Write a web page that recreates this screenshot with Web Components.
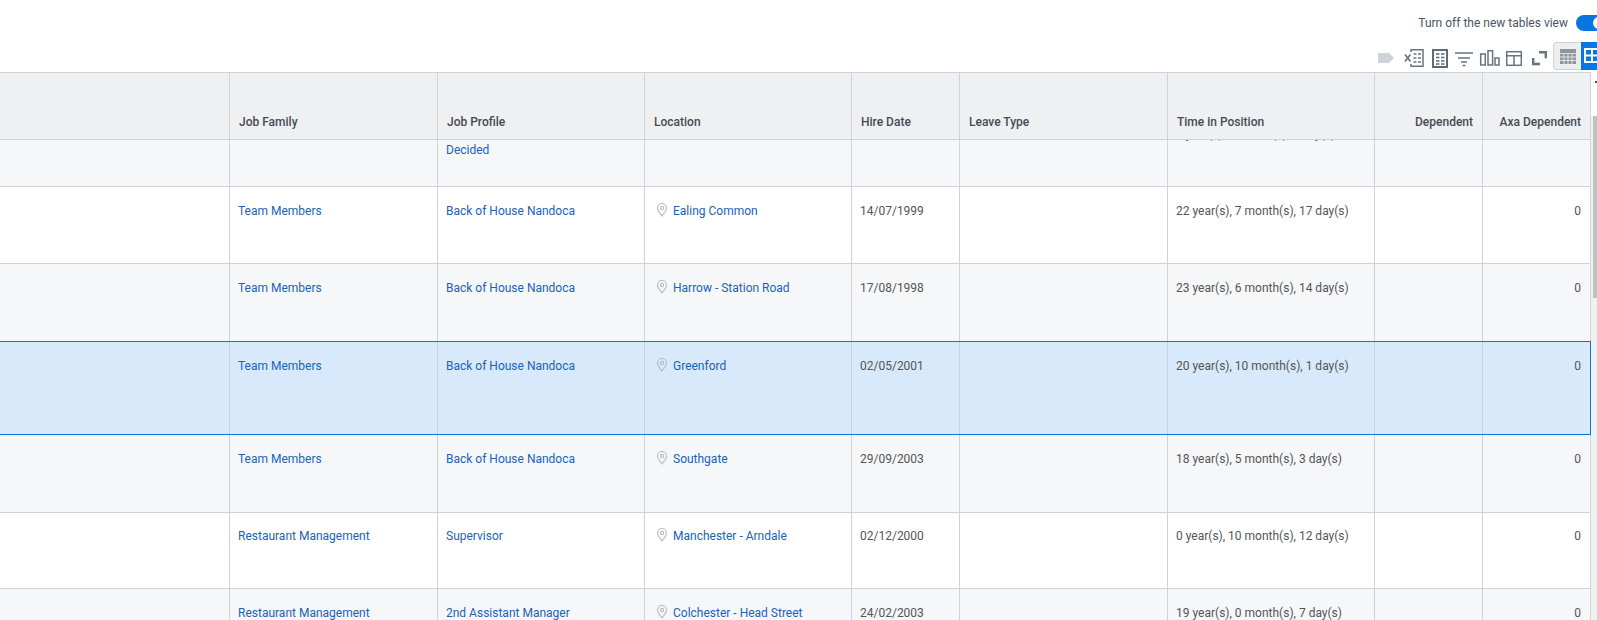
<!DOCTYPE html>
<html>
<head>
<meta charset="utf-8">
<title>Workers</title>
<style>
  html, body { margin: 0; height: 100%; overflow: hidden; background: #fff; }
  body { font-family: Roboto, "Liberation Sans", sans-serif; }
</style>
</head>
<body>
<wd-page>
  <wd-view-toggle slot="top">Turn off the new tables view</wd-view-toggle>
  <wd-toolbar slot="tools"></wd-toolbar>
  <wd-table slot="table"></wd-table>
</wd-page>

<script>
const COLS = '230px 208px 207px 207px 108px 208px 207px 108px 108px';

class WdPage extends HTMLElement {
  constructor() {
    super();
    this.attachShadow({ mode: 'open' });
    this.shadowRoot.innerHTML = `
      <style>
        :host { display: block; width: 1597px; height: 620px; overflow: hidden; position: relative; }
        #scrollbar { position: absolute; right: 0; top: 116px; bottom: 0; width: 6px; background: #f1f1f1; }
        #thumb { position: absolute; top: 0; left: 2px; right: 0; height: 182px; background: #c1c1c1; }
        #arrow { position: absolute; right: 0; top: 81px; width: 2px; height: 2px; background: #505050; }
      </style>
      <slot name="top"></slot>
      <slot name="tools"></slot>
      <slot name="table"></slot>
      <div id="arrow"></div>
      <div id="scrollbar"><div id="thumb"></div></div>
    `;
  }
}

class WdViewToggle extends HTMLElement {
  constructor() {
    super();
    this.attachShadow({ mode: 'open' });
    this.shadowRoot.innerHTML = `
      <style>
        :host { display: flex; justify-content: flex-end; align-items: center; height: 42px; box-sizing: border-box; padding-top: 4px; font-size: 12px; color: #4a5561; overflow: hidden; }
        #label { margin-right: 8px; }
        #switch { flex: none; width: 36px; height: 16px; border-radius: 8px; background: #0875e1; position: relative; margin-right: -15px; }
        #knob { position: absolute; left: 17px; top: 2px; width: 12px; height: 12px; border-radius: 50%; background: #fff; }
      </style>
      <span id="label"><slot></slot></span>
      <div id="switch"><div id="knob"></div></div>
    `;
  }
}

class WdToolbar extends HTMLElement {
  constructor() {
    super();
    this.attachShadow({ mode: 'open' });
    this.shadowRoot.innerHTML = `
      <style>
        :host { display: flex; justify-content: flex-end; align-items: flex-start; height: 30px; overflow: hidden; }
        svg { display: block; flex: none; width: 24px; height: 24px; fill: none; stroke: #6a747e; stroke-width: 1.5; }
        #icons { display: flex; margin: 4px 1px 0 0; }
        #excel { margin-left: 4px; }
        .gap { margin-left: 2px; }
        #grid { flex: none; width: 28px; height: 28px; box-sizing: border-box; background: #eceef0; border: 1px solid #ced3d9; border-right: 0; border-radius: 4px 0 0 4px; display: flex; align-items: center; justify-content: center; }
        #tile { flex: none; width: 16px; height: 28px; background: #0875e1; overflow: hidden; padding: 4px 0 0 3px; box-sizing: border-box; }
      </style>
      <div id="icons">
        <svg viewBox="0 0 24 24" style="stroke:none"><path d="M4 7h11l5 5-5 5H4z" fill="#ced3d9"/></svg>
        <svg id="excel" viewBox="0 0 24 24"><path d="M9 6V3.700h12v16.600H9V18"/><path d="M11.500 8h3M16 8h3M11.500 12h3M16 12h3M11.500 16h3M16 16h3"/><path d="M3 8.500l5.500 7M8.500 8.500l-5.500 7" stroke-width="1.700"/></svg>
        <svg class="gap" viewBox="0 0 24 24" style="stroke:#5e6a75"><rect x="5" y="4" width="14" height="17" stroke-width="2"/><path d="M8 8h3.500M13 8h3.500M8 11.500h3.500M13 11.500h3.500M8 15h3.500M13 15h3.500M8 18h3.500M13 18h3.500" stroke-width="1.500"/></svg>
        <svg viewBox="0 0 24 24"><path d="M3 7h18M6 12h12M9 16h6M10.500 19.500h3"/></svg>
        <svg class="gap" viewBox="0 0 24 24"><rect x="2.700" y="8" width="4.600" height="11"/><rect x="10" y="4.700" width="4.600" height="14.300"/><rect x="17" y="12" width="4" height="7"/></svg>
        <svg viewBox="0 0 24 24"><rect x="4.700" y="5.700" width="14.600" height="13.600"/><path d="M4.700 9.700h14.600M12 9.700v9.600"/></svg>
        <svg class="gap" viewBox="0 0 24 24"><path d="M11 6.200h6.800v6" stroke-width="2.400"/><path d="M5.200 12v6h6.800" stroke-width="2.400"/></svg>
      </div>
      <div id="grid">
        <svg viewBox="0 0 16 15" style="width:16px;height:15px;stroke:none"><rect width="16" height="15" fill="#8d959d"/><path d="M0 4.500h16M0 8h16M0 11.500h16M4 4v11M8 4v11M12 4v11" stroke="#dfe2e5" stroke-width="1"/></svg>
      </div>
      <div id="tile">
        <svg viewBox="0 0 20 15" style="width:20px;height:15px;margin-top:2px;stroke:#fff;stroke-width:2"><rect x="1" y="1" width="18" height="13"/><path d="M8 1v13M1 7.500h18"/></svg>
      </div>
    `;
  }
}

class WdHeaderCell extends HTMLElement {
  constructor() {
    super();
    this.attachShadow({ mode: 'open' });
    this.shadowRoot.innerHTML = `
      <style>
        :host { display: flex; align-items: flex-end; box-sizing: border-box; padding: 0 9px 9px 9px; border-right: 1px solid #ced3d9; font-size: 12px; font-weight: 500; color: #444b55; line-height: 16px; }
        :host([right]) { justify-content: flex-end; }
      </style>
      <slot></slot>
    `;
  }
}

class WdCell extends HTMLElement {
  constructor() {
    super();
    this.attachShadow({ mode: 'open' });
    this.shadowRoot.innerHTML = `
      <style>
        :host { display: flex; align-items: flex-start; box-sizing: border-box; padding: var(--cell-top, 16px) 9px 0 8px; border-right: 1px solid #ced3d9; font-size: 12px; line-height: 16px; color: #555; white-space: nowrap; min-width: 0; overflow: hidden; }
        :host([link]) { color: #1b62b8; }
        :host([right]) { justify-content: flex-end; }
        :host([pin]) { padding-left: 11px; }
        svg { flex: none; width: 12px; height: 14px; margin-right: 5px; fill: none; stroke: #b9c0c7; stroke-width: 1.2; }
      </style>
      <svg viewBox="0 0 12 14"><path d="M6 13C3.500 9.800 1.500 7.500 1.500 5a4.500 4.500 0 0 1 9 0c0 2.500-2 4.800-4.500 8z"/><circle cx="6" cy="5" r="1.600"/></svg>
      <slot></slot>
    `;
    if (!this.hasAttribute('pin')) this.shadowRoot.querySelector('svg').remove();
  }
}

class WdRow extends HTMLElement {
  constructor() {
    super();
    this.attachShadow({ mode: 'open' });
    this.shadowRoot.innerHTML = `
      <style>
        :host { display: grid; grid-template-columns: ${COLS}; box-sizing: border-box; border-bottom: 1px solid #ced3d9; background: #fff; flex: none; }
        :host([alt]) { background: #f6f7f9; }
        :host([selected]) { background: #d7e9fa; position: relative; }
        #line { display: none; }
        :host([selected]) #line { display: block; position: absolute; left: 0; right: 0; top: -1px; bottom: -1px; border: 1px solid #0875e1; border-left: 0; pointer-events: none; }
      </style>
      <slot></slot>
      <div id="line"></div>
    `;
  }
}

class WdTable extends HTMLElement {
  constructor() {
    super();
    this.attachShadow({ mode: 'open' });
    this.shadowRoot.innerHTML = `
      <style>
        :host { display: block; width: 1591px; }
        #head { display: grid; grid-template-columns: ${COLS}; height: 68px; box-sizing: border-box; background: #eff0f2; border-top: 1px solid #ced3d9; border-bottom: 1px solid #ced3d9; }
        #body { display: flex; flex-direction: column; }
        #clipped { height: 47px; overflow: hidden; }
        #cut { margin-top: -31px; }
      </style>
      <div id="head">
        <wd-header-cell></wd-header-cell>
        <wd-header-cell>Job Family</wd-header-cell>
        <wd-header-cell>Job Profile</wd-header-cell>
        <wd-header-cell>Location</wd-header-cell>
        <wd-header-cell>Hire Date</wd-header-cell>
        <wd-header-cell>Leave Type</wd-header-cell>
        <wd-header-cell>Time in Position</wd-header-cell>
        <wd-header-cell right>Dependent</wd-header-cell>
        <wd-header-cell right>Axa Dependent</wd-header-cell>
      </div>
      <div id="body"></div>
    `;
    const rows = [
      [77, 16, 'Team Members', 'Back of House Nandoca', 'Ealing Common', '14/07/1999', '22 year(s), 7 month(s), 17 day(s)', '0'],
      [78, 16, 'Team Members', 'Back of House Nandoca', 'Harrow - Station Road', '17/08/1998', '23 year(s), 6 month(s), 14 day(s)', '0'],
      [93, 16, 'Team Members', 'Back of House Nandoca', 'Greenford', '02/05/2001', '20 year(s), 10 month(s), 1 day(s)', '0'],
      [78, 16, 'Team Members', 'Back of House Nandoca', 'Southgate', '29/09/2003', '18 year(s), 5 month(s), 3 day(s)', '0'],
      [76, 15, 'Restaurant Management', 'Supervisor', 'Manchester - Arndale', '02/12/2000', '0 year(s), 10 month(s), 12 day(s)', '0'],
      [78, 16, 'Restaurant Management', '2nd Assistant Manager', 'Colchester - Head Street', '24/02/2003', '19 year(s), 0 month(s), 7 day(s)', '0'],
    ];
    const body = this.shadowRoot.getElementById('body');
    body.innerHTML = `
      <div id="clipped"><wd-row alt id="cut" style="height:78px">
        <wd-cell></wd-cell><wd-cell></wd-cell><wd-cell link style="padding-top:33px">Decided</wd-cell><wd-cell></wd-cell><wd-cell></wd-cell><wd-cell></wd-cell><wd-cell style="padding-top:17px">5 year(s), 3 month(s), 9 day(s)</wd-cell><wd-cell></wd-cell><wd-cell></wd-cell>
      </wd-row></div>`;
    rows.forEach((r, i) => {
      const attrs = i === 2 ? 'selected' : (i % 2 ? 'alt' : '');
      body.insertAdjacentHTML('beforeend', `
        <wd-row ${attrs} style="height:${r[0]}px;--cell-top:${r[1]}px">
          <wd-cell></wd-cell>
          <wd-cell link>${r[2]}</wd-cell>
          <wd-cell link>${r[3]}</wd-cell>
          <wd-cell link pin>${r[4]}</wd-cell>
          <wd-cell>${r[5]}</wd-cell>
          <wd-cell></wd-cell>
          <wd-cell>${r[6]}</wd-cell>
          <wd-cell></wd-cell>
          <wd-cell right>${r[7]}</wd-cell>
        </wd-row>`);
    });
  }
}

customElements.define('wd-page', WdPage);
customElements.define('wd-view-toggle', WdViewToggle);
customElements.define('wd-toolbar', WdToolbar);
customElements.define('wd-header-cell', WdHeaderCell);
customElements.define('wd-cell', WdCell);
customElements.define('wd-row', WdRow);
customElements.define('wd-table', WdTable);
</script>
</body>
</html>
